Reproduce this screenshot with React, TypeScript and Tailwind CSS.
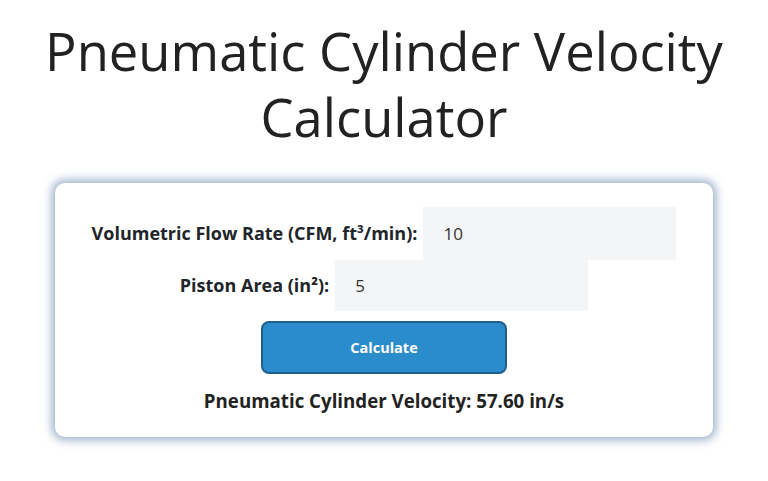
export default function App() {
  return (
    <div className="min-h-screen bg-white text-[#212529]" style={{ fontFamily: '"Open Sans", "Noto Sans", sans-serif' }}>
      <h1 className="pt-[18px] text-center text-[52.5px] font-normal leading-[66px] text-[#222]">
        Pneumatic Cylinder Velocity
        <br />
        Calculator
      </h1>

      <div className="mx-[55px] mt-[33px] h-[254px] rounded-[10px] bg-white px-5 pt-6 text-center shadow-[0_0_10px_3px_rgba(88,118,165,0.6)]">
        <div className="flex items-center justify-center">
          <label className="mr-[6px] text-[18px] font-bold">
            Volumetric Flow Rate (CFM, ft³/min):
          </label>
          <div className="flex h-[53px] w-[253px] items-center bg-[#f4f5f7] pl-5 text-[17px] text-[#333]">10</div>
        </div>
        <div className="flex items-center justify-center">
          <label className="mr-[6px] text-[18px] font-bold">Piston Area (in²):</label>
          <div className="flex h-[51px] w-[253px] items-center bg-[#f4f5f7] pl-5 text-[17px] text-[#333]">5</div>
        </div>
        <button className="mt-[10px] h-[53px] w-[246px] rounded-[8px] border-2 border-[#1f5f90] bg-[#2b8ccb] text-[14.5px] font-bold text-white">
          Calculate
        </button>
        <p className="mt-[13px] text-[18.7px] font-bold text-[#222]">
          Pneumatic Cylinder Velocity: 57.60 in/s
        </p>
      </div>
    </div>
  )
}
